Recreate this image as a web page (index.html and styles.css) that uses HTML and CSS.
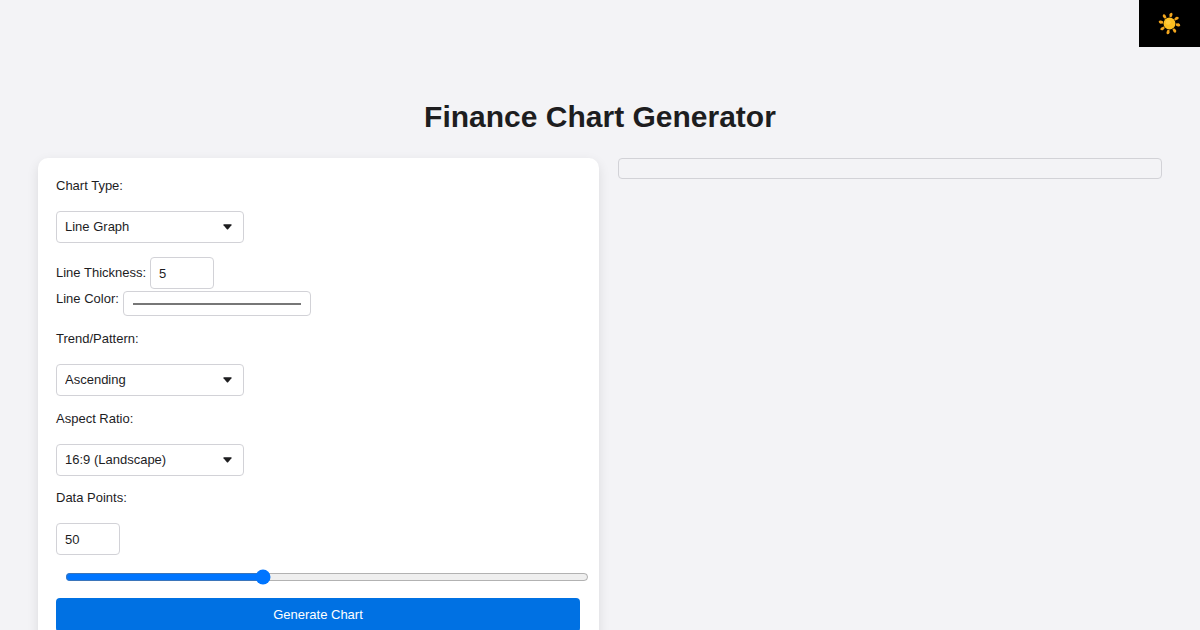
FILE: index.html
```html
<!DOCTYPE html>
<html lang="en">
<head>
<meta charset="utf-8">
<meta name="viewport" content="width=device-width, initial-scale=1">
<title>Finance Chart Generator</title>
<link rel="stylesheet" href="styles.css">
</head>
<body>
<button class="theme-toggle" type="button" aria-label="Toggle theme">
  <svg class="sun" viewBox="0 0 24 24" aria-hidden="true">
    <g fill="#f2a51d" transform="rotate(10 12 12)">
      <path id="ray" d="M10.900 5.300 L10.200 2.600 Q10.600 .8 12.400 .5 Q13.700 1.200 13.500 2.800 L12.900 5.300 Z"/>
      <use href="#ray" transform="rotate(45 12 12)"/>
      <use href="#ray" transform="rotate(90 12 12)"/>
      <use href="#ray" transform="rotate(135 12 12)"/>
      <use href="#ray" transform="rotate(180 12 12)"/>
      <use href="#ray" transform="rotate(225 12 12)"/>
      <use href="#ray" transform="rotate(270 12 12)"/>
      <use href="#ray" transform="rotate(315 12 12)"/>
    </g>
    <circle cx="12" cy="12" r="6.200" fill="#fdbf20"/>
    <circle cx="10.600" cy="10.600" r="2.600" fill="#ffcb3d"/>
  </svg>
</button>
<main class="page">
  <h1 class="title">Finance Chart Generator</h1>
  <div class="layout">
    <form class="panel">
      <div class="field field-tight">
        <label for="type">Chart Type:</label>
        <div class="select">
          <select id="type"><option>Line Graph</option></select>
          <svg class="arrow" viewBox="0 0 10 6" aria-hidden="true"><path d="M1 0H9Q10 0 9.400 1L5.700 5.500Q5 6 4.300 5.500L.6 1Q0 0 1 0Z"/></svg>
        </div>
      </div>
      <div class="line-options">
        <div class="inline-field">
          <label for="thickness">Line Thickness:</label>
          <input class="number" id="thickness" type="number" value="5">
        </div>
        <div class="inline-field inline-field-color">
          <label for="color">Line Color:</label>
          <input class="color" id="color" type="color" value="#000000">
        </div>
      </div>
      <div class="field">
        <label for="trend">Trend/Pattern:</label>
        <div class="select">
          <select id="trend"><option>Ascending</option></select>
          <svg class="arrow" viewBox="0 0 10 6" aria-hidden="true"><path d="M1 0H9Q10 0 9.400 1L5.700 5.500Q5 6 4.300 5.500L.6 1Q0 0 1 0Z"/></svg>
        </div>
      </div>
      <div class="field field-tight">
        <label for="ratio">Aspect Ratio:</label>
        <div class="select">
          <select id="ratio"><option>16:9 (Landscape)</option></select>
          <svg class="arrow" viewBox="0 0 10 6" aria-hidden="true"><path d="M1 0H9Q10 0 9.400 1L5.700 5.500Q5 6 4.300 5.500L.6 1Q0 0 1 0Z"/></svg>
        </div>
      </div>
      <div class="field field-tight">
        <label for="points">Data Points:</label>
        <input class="number" id="points" type="number" value="50">
      </div>
      <input class="slider" type="range" min="2" max="130" value="50" aria-label="Data points slider">
      <button class="generate" type="button">Generate Chart</button>
    </form>
    <section class="chart" aria-label="Chart"></section>
  </div>
</main>
</body>
</html>
```
FILE: styles.css
```css
* {
  box-sizing: border-box;
}

body {
  margin: 0;
  background: #f3f3f6;
  color: #1d1d1f;
  font: 13px/16px "Liberation Sans", Arial, sans-serif;
}

.theme-toggle {
  position: absolute;
  top: 0;
  right: 0;
  padding: 12px 19px;
  border: 0;
  background: #000;
}

.sun {
  display: block;
  width: 23px;
  height: 23px;
}

.page {
  padding: 99px 38px 38px;
}

.title {
  margin: 0 0 23px;
  font-size: 30px;
  line-height: 36px;
  text-align: center;
}

.layout {
  display: grid;
  grid-template-columns: 562fr 545fr;
  gap: 19px;
  align-items: start;
}

.panel {
  display: flex;
  flex-direction: column;
  padding: 20px 19px 20px 18px;
  border-radius: 10px;
  background: #fff;
  box-shadow: 0 4px 12px rgba(0, 0, 0, 0.1);
}

.field {
  display: flex;
  flex-direction: column;
  align-items: flex-start;
  gap: 17px;
  margin-bottom: 15px;
}

.field-tight {
  margin-bottom: 14px;
}

.select {
  position: relative;
  width: 188px;
}

select,
.number,
.color {
  height: 32px;
  margin: 0;
  border: 1px solid #d2d2d7;
  border-radius: 4px;
  background: #fff;
  color: #1d1d1f;
  font: inherit;
}

select {
  display: block;
  width: 100%;
  padding: 0 8px;
  appearance: none;
}

.arrow {
  position: absolute;
  top: 13px;
  right: 12px;
  width: 9px;
  height: 6px;
  fill: #1d1d1f;
  pointer-events: none;
}

.number {
  width: 64px;
  padding: 0 8px;
}

.line-options {
  display: flex;
  flex-direction: column;
  gap: 2px;
  margin-bottom: 15px;
}

.inline-field {
  display: flex;
  align-items: center;
  gap: 4px;
}

.inline-field-color {
  align-items: flex-start;
}

.color {
  width: 188px;
  height: 25px;
  padding: 7px;
}

.slider {
  width: 100%;
  height: 16px;
  margin: 0 0 13px 9px;
  accent-color: #0075ff;
}

.generate {
  height: 34px;
  border: 0;
  border-radius: 4px;
  background: #0071e3;
  color: #fff;
  font: inherit;
}

.chart {
  min-height: 21px;
  border: 1px solid #d2d2d7;
  border-radius: 4px;
}
```
